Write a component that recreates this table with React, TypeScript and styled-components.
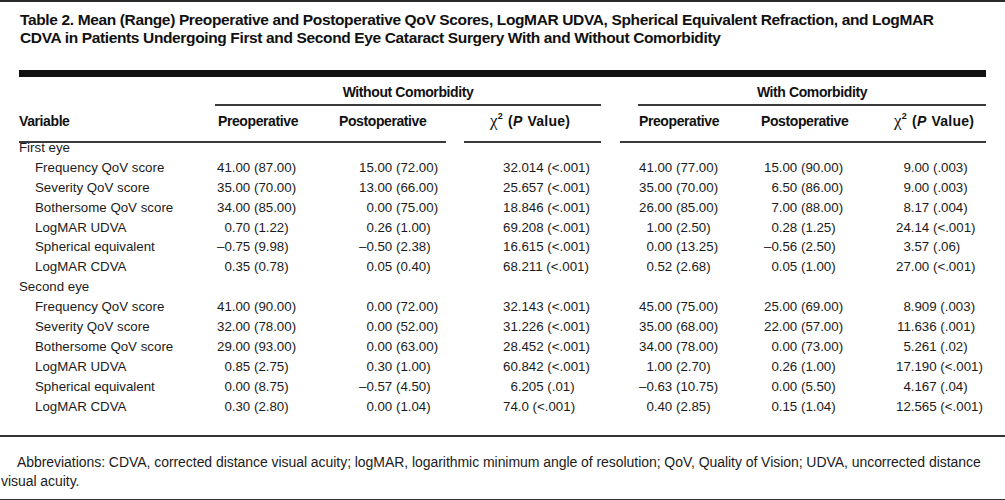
import React from "react";
import styled, { createGlobalStyle } from "styled-components";

const GlobalStyle = createGlobalStyle`
  html, body {
    margin: 0;
    padding: 0;
    background: #fff;
  }
  body {
    font-family: "Liberation Sans", Arial, sans-serif;
    color: #1b1b1b;
  }
`;

// x edges: 19 | 210 | 330 | 464 | 620 | 755 | 880 | 986
const COLS = "191px 120px 134px 156px 135px 125px 106px";

const Page = styled.div`
  width: 1005px;
  height: 500px;
  border-top: 2px solid #2b2b2b;
  box-sizing: border-box;
  overflow: hidden;
`;

const Title = styled.h1`
  margin: 0;
  padding: 9px 10px 0 20px;
  font-family: "Liberation Sans", Arial, sans-serif;
  font-weight: bold;
  font-size: 15.5px;
  letter-spacing: -0.36px;
  line-height: 18px;
  white-space: nowrap;
  color: #111;
`;

const Table = styled.div`
  margin: 23px 19px 0 19px;
  border-top: 7px solid #111;
`;

const HeadRow = styled.div<{ $pt: number; $pb: number }>`
  display: grid;
  grid-template-columns: ${COLS};
  padding-top: ${(p) => p.$pt}px;
  font-weight: bold;
  font-size: 14px;
  letter-spacing: -0.4px;
  line-height: 18px;
  color: #111;

  & > * {
    padding-bottom: ${(p) => p.$pb}px;
  }
`;

const GroupHead = styled.div<{ $span: string; $ml?: number; $mr?: number }>`
  grid-column: ${(p) => p.$span};
  margin-left: ${(p) => p.$ml ?? 0}px;
  margin-right: ${(p) => p.$mr ?? 0}px;
  text-align: center;
  border-bottom: 2px solid #3a3a3a;
`;

const HeadCell = styled.div<{ $pl: number; $cut?: number }>`
  padding-left: ${(p) => p.$pl}px;
  margin-right: ${(p) => p.$cut ?? 0}px;
  border-bottom: 2px solid #3a3a3a;
  white-space: nowrap;
`;

const ChiLabel = styled.span`
  letter-spacing: 0.2px;
  word-spacing: 1px;
`;

const Chi = styled.span`
  font-family: "Liberation Serif", serif;
  font-weight: normal;
  font-size: 17px;
`;

const Sup = styled.sup`
  font-size: 9px;
  vertical-align: 7px;
  line-height: 0;
`;

const Body = styled.div`
  margin-top: -5px;
  padding-bottom: 19px;
  font-size: 13.3px;
  line-height: 19.9px;
`;

const Row = styled.div`
  display: grid;
  grid-template-columns: ${COLS};
  height: 19.9px;
  white-space: nowrap;
`;

const Label = styled.div<{ $sub?: boolean }>`
  padding-left: ${(p) => (p.$sub ? 16 : 0)}px;
`;

const NumCell = styled.div<{ $pl: number }>`
  padding-left: ${(p) => p.$pl}px;
  display: flex;
`;

const Int = styled.span`
  display: inline-block;
  width: 1.112em;
  text-align: right;
`;

const Frac = styled.span``;

const Footer = styled.div`
  border-top: 2px solid #333;
  border-bottom: 2px solid #333;
  padding: 16px 12px 8px 1px;
  font-size: 14px;
  letter-spacing: -0.05px;
  line-height: 19px;
  text-indent: 16px;
  color: #1b1b1b;
`;

const dataPads = [7, 29, 39, 19, 9, 16];
const headPads = [0, 8, 9, 26, 19, 6, 14];

type Group = { name: string; rows: [string, ...string[]][] };

const groups: Group[] = [
  {
    name: "First eye",
    rows: [
      ["Frequency QoV score", "41.00 (87.00)", "15.00 (72.00)", "32.014 (<.001)", "41.00 (77.00)", "15.00 (90.00)", "9.00 (.003)"],
      ["Severity QoV score", "35.00 (70.00)", "13.00 (66.00)", "25.657 (<.001)", "35.00 (70.00)", "6.50 (86.00)", "9.00 (.003)"],
      ["Bothersome QoV score", "34.00 (85.00)", "0.00 (75.00)", "18.846 (<.001)", "26.00 (85.00)", "7.00 (88.00)", "8.17 (.004)"],
      ["LogMAR UDVA", "0.70 (1.22)", "0.26 (1.00)", "69.208 (<.001)", "1.00 (2.50)", "0.28 (1.25)", "24.14 (<.001)"],
      ["Spherical equivalent", "–0.75 (9.98)", "–0.50 (2.38)", "16.615 (<.001)", "0.00 (13.25)", "–0.56 (2.50)", "3.57 (.06)"],
      ["LogMAR CDVA", "0.35 (0.78)", "0.05 (0.40)", "68.211 (<.001)", "0.52 (2.68)", "0.05 (1.00)", "27.00 (<.001)"],
    ],
  },
  {
    name: "Second eye",
    rows: [
      ["Frequency QoV score", "41.00 (90.00)", "0.00 (72.00)", "32.143 (<.001)", "45.00 (75.00)", "25.00 (69.00)", "8.909 (.003)"],
      ["Severity QoV score", "32.00 (78.00)", "0.00 (52.00)", "31.226 (<.001)", "35.00 (68.00)", "22.00 (57.00)", "11.636 (.001)"],
      ["Bothersome QoV score", "29.00 (93.00)", "0.00 (63.00)", "28.452 (<.001)", "34.00 (78.00)", "0.00 (73.00)", "5.261 (.02)"],
      ["LogMAR UDVA", "0.85 (2.75)", "0.30 (1.00)", "60.842 (<.001)", "1.00 (2.70)", "0.26 (1.00)", "17.190 (<.001)"],
      ["Spherical equivalent", "0.00 (8.75)", "–0.57 (4.50)", "6.205 (.01)", "–0.63 (10.75)", "0.00 (5.50)", "4.167 (.04)"],
      ["LogMAR CDVA", "0.30 (2.80)", "0.00 (1.04)", "74.0 (<.001)", "0.40 (2.85)", "0.15 (1.04)", "12.565 (<.001)"],
    ],
  },
];

// aligns a value on its first decimal point
const Num: React.FC<{ value: string; pad: number }> = ({ value, pad }) => {
  const i = value.indexOf(".");
  return (
    <NumCell $pl={pad}>
      <Int>{value.slice(0, i)}</Int>
      <Frac>{value.slice(i)}</Frac>
    </NumCell>
  );
};

const ChiHead = () => (
  <ChiLabel>
    <Chi>χ</Chi>
    <Sup>2</Sup> (<i>P</i> Value)
  </ChiLabel>
);

const App: React.FC = () => {
  return (
    <>
      <GlobalStyle />
      <Page>
        <Title>
          Table 2. Mean (Range) Preoperative and Postoperative QoV Scores, LogMAR UDVA, Spherical Equivalent Refraction, and LogMAR
          <br />
          CDVA in Patients Undergoing First and Second Eye Cataract Surgery With and Without Comorbidity
        </Title>
        <Table>
          <HeadRow $pt={6} $pb={3}>
            <GroupHead $span="2 / 5" $ml={5} $mr={19}>
              Without Comorbidity
            </GroupHead>
            <GroupHead $span="5 / 8" $ml={18}>
              With Comorbidity
            </GroupHead>
          </HeadRow>
          <HeadRow $pt={6} $pb={11}>
            <HeadCell $pl={headPads[0]}>Variable</HeadCell>
            <HeadCell $pl={headPads[1]}>Preoperative</HeadCell>
            <HeadCell $pl={headPads[2]} $cut={18}>
              Postoperative
            </HeadCell>
            <HeadCell $pl={headPads[3]} $cut={19}>
              <ChiHead />
            </HeadCell>
            <HeadCell $pl={headPads[4]}>Preoperative</HeadCell>
            <HeadCell $pl={headPads[5]}>Postoperative</HeadCell>
            <HeadCell $pl={headPads[6]}>
              <ChiHead />
            </HeadCell>
          </HeadRow>
          <Body>
            {groups.map((g) => (
              <React.Fragment key={g.name}>
                <Row>
                  <Label>{g.name}</Label>
                </Row>
                {g.rows.map(([label, ...vals]) => (
                  <Row key={label}>
                    <Label $sub>{label}</Label>
                    {vals.map((v, i) => (
                      <Num key={i} value={v} pad={dataPads[i]} />
                    ))}
                  </Row>
                ))}
              </React.Fragment>
            ))}
          </Body>
        </Table>
        <Footer>
          Abbreviations: CDVA, corrected distance visual acuity; logMAR, logarithmic minimum angle of resolution; QoV, Quality of Vision; UDVA, uncorrected distance visual acuity.
        </Footer>
      </Page>
    </>
  );
};

export default App;
